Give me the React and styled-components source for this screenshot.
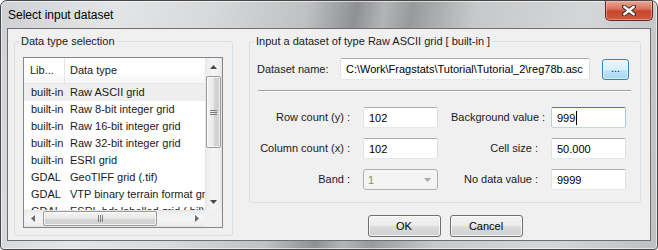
import React from "react";
import styled, { createGlobalStyle } from "styled-components";

//-----데이터
const rows = [
  ["built-in", "Raw ASCII grid"],
  ["built-in", "Raw 8-bit integer grid"],
  ["built-in", "Raw 16-bit integer grid"],
  ["built-in", "Raw 32-bit integer grid"],
  ["built-in", "ESRI grid"],
  ["GDAL", "GeoTIFF grid (.tif)"],
  ["GDAL", "VTP binary terrain format grid (.bt)"],
  ["GDAL", "ESRI .hdr labelled grid (.bil)"],
];

//-----아이콘
const Tri = ({ dir, color = "#4a4a4a" }) => {
  const pts = {
    up: "0,4 7,4 3.5,0",
    down: "0,0 7,0 3.5,4",
    left: "4,0 4,7 0,3.5",
    right: "0,0 0,7 4,3.5",
  }[dir];
  const v = dir === "up" || dir === "down";
  return (
    <svg width={v ? 7 : 4} height={v ? 4 : 7} viewBox={v ? "0 0 7 4" : "0 0 4 7"}>
      <polygon points={pts} fill={color} />
    </svg>
  );
};

const CloseGlyph = () => (
  <svg width="14" height="11" viewBox="0 0 14 11">
    <path d="M2 1.5 L12 9.5 M12 1.5 L2 9.5" stroke="#3a2a28" strokeWidth="4.2" strokeLinecap="round" />
    <path d="M2.3 1.8 L11.7 9.2 M11.7 1.8 L2.3 9.2" stroke="#fff" strokeWidth="2.4" strokeLinecap="round" />
  </svg>
);

const Grip = ({ vertical }) =>
  vertical ? (
    <svg width="7" height="7" viewBox="0 0 7 7">
      <path d="M0 1.5h7M0 3.5h7M0 5.5h7" stroke="#7d7d7d" strokeWidth="1" />
    </svg>
  ) : (
    <svg width="7" height="7" viewBox="0 0 7 7">
      <path d="M1.5 0v7M3.5 0v7M5.5 0v7" stroke="#7d7d7d" strokeWidth="1" />
    </svg>
  );

//-----메인
function App() {
  return (
    <>
      <GlobalStyle />
      <Window>
        <TitleBar>
          <Title>Select input dataset</Title>
          <CloseButton>
            <CloseGlyph />
          </CloseButton>
        </TitleBar>
        <Client>
          <Group $width={219}>
            <Legend>Data type selection</Legend>
            <ListView>
              <ListBody>
                <HeaderRow>
                  <HeaderCell $first>Lib...</HeaderCell>
                  <HeaderCell>Data type</HeaderCell>
                </HeaderRow>
                {rows.map(([lib, name], i) => (
                  <Row key={i} $selected={i === 0}>
                    <Cell $first>{lib}</Cell>
                    <Cell>{name}</Cell>
                  </Row>
                ))}
              </ListBody>
              <VScroll>
                <ArrowBox>
                  <Tri dir="up" />
                </ArrowBox>
                <VThumb>
                  <Grip vertical />
                </VThumb>
                <Spacer />
                <ArrowBox>
                  <Tri dir="down" />
                </ArrowBox>
              </VScroll>
              <HScroll>
                <ArrowBox>
                  <Tri dir="left" color="#6a6a6a" />
                </ArrowBox>
                <HThumb>
                  <Grip />
                </HThumb>
                <Spacer />
                <ArrowBox>
                  <Tri dir="right" color="#6a6a6a" />
                </ArrowBox>
              </HScroll>
              <Corner />
            </ListView>
          </Group>

          <RightColumn>
            <Group $width={392}>
              <Legend>Input a dataset of type Raw ASCII grid [ built-in ]</Legend>
              <DatasetRow>
                <DatasetLabel>Dataset name:</DatasetLabel>
                <TextBox $width={250} $height={22}>
                  C:\Work\Fragstats\Tutorial\Tutorial_2\reg78b.asc
                </TextBox>
                <BrowseButton>...</BrowseButton>
              </DatasetRow>
              <Separator />
              <FormGrid>
                <FieldLabel>Row count (y) :</FieldLabel>
                <TextBox>102</TextBox>
                <FieldLabel>Background value :</FieldLabel>
                <TextBox $focused>
                  999
                  <Caret />
                </TextBox>
                <FieldLabel>Column count (x) :</FieldLabel>
                <TextBox>102</TextBox>
                <FieldLabel>Cell size :</FieldLabel>
                <TextBox>50.000</TextBox>
                <FieldLabel>Band :</FieldLabel>
                <Combo>
                  <span>1</span>
                  <Tri dir="down" color="#a9a9a9" />
                </Combo>
                <FieldLabel>No data value :</FieldLabel>
                <TextBox>9999</TextBox>
              </FormGrid>
            </Group>
            <ButtonRow>
              <PushButton>OK</PushButton>
              <PushButton>Cancel</PushButton>
            </ButtonRow>
          </RightColumn>
        </Client>
      </Window>
    </>
  );
}

export default App;

//-----스타일
const GlobalStyle = createGlobalStyle`
  html, body {
    margin: 0;
    padding: 0;
    background: #ffffff;
  }
  body {
    font-family: "Liberation Sans", Arial, sans-serif;
    font-size: 11px;
    color: #1a1a1a;
  }
  * { box-sizing: border-box; }
`;

const Window = styled.div`
  width: 658px;
  height: 250px;
  display: flex;
  flex-direction: column;
  padding: 0 6px 8px;
  border: 1px solid #474747;
  border-radius: 7px 7px 4px 4px;
  box-shadow: inset 0 0 0 1px rgba(255, 255, 255, 0.6);
  background: linear-gradient(
    100deg,
    #cfd1d4 0%,
    #e4e5e7 16%,
    #d8d9db 30%,
    #bfc0c2 44%,
    #8f9093 51%,
    #b3b4b6 55%,
    #999a9c 59%,
    #c7c8ca 68%,
    #d5d6d8 84%,
    #bfc0c2 100%
  );
`;

const TitleBar = styled.div`
  height: 27px;
  display: flex;
  align-items: flex-start;
  justify-content: space-between;
  margin-right: -2px;
`;

const Title = styled.div`
  padding-left: 1px;
  line-height: 28px;
  font-size: 12px;
  color: #000;
`;

const CloseButton = styled.div`
  width: 48px;
  height: 20px;
  display: flex;
  align-items: center;
  justify-content: center;
  border: 1px solid #5c2a22;
  border-top: none;
  border-radius: 0 0 5px 5px;
  background: linear-gradient(#e9a695 0%, #d9755f 40%, #c7452d 55%, #cf5a3e 100%);
  box-shadow: inset 0 0 0 1px rgba(255, 210, 200, 0.45);
`;

const Client = styled.div`
  flex: 1;
  display: flex;
  gap: 16px;
  padding: 6px 9px 0 6px;
  border: 1px solid #6e6e6e;
  background: #f0f0f0;
`;

const Group = styled.fieldset`
  width: ${(p) => p.$width}px;
  margin: 0;
  padding: 0;
  align-self: flex-start;
  border: 1px solid #d5dfe5;
  border-radius: 3px;
`;

const Legend = styled.legend`
  margin-left: 4px;
  padding: 0 2px;
  line-height: 13px;
  color: #1a1a1a;
`;

const ListView = styled.div`
  width: 200px;
  height: 171px;
  margin: 9px 9px 7px 8px;
  display: grid;
  grid-template-columns: 181px 17px;
  grid-template-rows: 152px 17px;
  border: 1px solid #828790;
  background: #fff;
`;

const ListBody = styled.div`
  overflow: hidden;
`;

const HeaderRow = styled.div`
  height: 26px;
  display: grid;
  grid-template-columns: 41px 1fr;
  border-bottom: 1px solid #e5e5e5;
  background: linear-gradient(#ffffff 0%, #ffffff 55%, #f5f6f7 100%);
`;

const HeaderCell = styled.div`
  padding-left: ${(p) => (p.$first ? 6 : 5)}px;
  line-height: 25px;
  white-space: nowrap;
  border-right: ${(p) => (p.$first ? "1px solid #e5e5e5" : "none")};
`;

const Row = styled.div`
  height: 17px;
  display: grid;
  grid-template-columns: 41px 1fr;
  line-height: 17px;
  white-space: nowrap;
  background: ${(p) => (p.$selected ? "#eeeeee" : "transparent")};
`;

const Cell = styled.div`
  padding-left: ${(p) => (p.$first ? 7 : 5)}px;
  overflow: ${(p) => (p.$first ? "hidden" : "visible")};
`;

const VScroll = styled.div`
  display: flex;
  flex-direction: column;
  background: linear-gradient(90deg, #e3e3e3 0, #eeeeee 2px, #f5f5f5 50%, #eeeeee calc(100% - 2px), #e3e3e3 100%);
`;

const HScroll = styled.div`
  display: flex;
  background: linear-gradient(#e3e3e3 0, #eeeeee 2px, #f5f5f5 50%, #eeeeee calc(100% - 2px), #e3e3e3 100%);
`;

const ArrowBox = styled.div`
  width: 17px;
  height: 17px;
  flex: none;
  display: flex;
  align-items: center;
  justify-content: center;
`;

const Spacer = styled.div`
  flex: 1;
`;

const VThumb = styled.div`
  height: 72px;
  margin: 1px 1px 0;
  display: flex;
  align-items: center;
  justify-content: center;
  border: 1px solid #9a9a9a;
  border-radius: 2px;
  background: linear-gradient(90deg, #f4f4f4 0%, #e8e8e8 50%, #d6d6d6 51%, #cfcfcf 100%);
  box-shadow: inset 0 0 0 1px rgba(255, 255, 255, 0.7);
`;

const HThumb = styled.div`
  width: 114px;
  margin: 1px 0 1px 2px;
  display: flex;
  align-items: center;
  justify-content: center;
  border: 1px solid #9a9a9a;
  border-radius: 2px;
  background: linear-gradient(#f4f4f4 0%, #e8e8e8 50%, #d6d6d6 51%, #cfcfcf 100%);
  box-shadow: inset 0 0 0 1px rgba(255, 255, 255, 0.7);
`;

const Corner = styled.div`
  background: #f0f0f0;
`;

const RightColumn = styled.div`
  display: flex;
  flex-direction: column;
`;

const DatasetRow = styled.div`
  margin-top: 10px;
  padding-left: 7px;
  display: flex;
  align-items: center;
`;

const DatasetLabel = styled.div`
  width: 83px;
  flex: none;
`;

const TextBox = styled.div`
  width: ${(p) => p.$width || 75}px;
  height: ${(p) => p.$height || 21}px;
  padding-left: 5px;
  display: flex;
  align-items: center;
  overflow: hidden;
  white-space: nowrap;
  color: #000;
  background: #fff;
  border: 1px solid;
  border-radius: 2px;
  border-color: ${(p) =>
    p.$focused ? "#3d7bad #a4c9e3 #b7d9ed #b5cfe7" : "#abadb3 #dbdfe6 #e3e9ef #e2e3ea"};
`;

const Caret = styled.span`
  width: 1px;
  height: 14px;
  margin-left: 1px;
  background: #000;
`;

const BrowseButton = styled.div`
  width: 27px;
  height: 21px;
  margin-left: 12px;
  display: flex;
  align-items: center;
  justify-content: center;
  padding-bottom: 2px;
  color: #102040;
  border: 1px solid #3c7fb1;
  border-radius: 3px;
  background: linear-gradient(#eaf6fd 0%, #d9f0fc 50%, #bee6fd 51%, #a7d9f5 100%);
  box-shadow: inset 0 0 0 1px rgba(255, 255, 255, 0.55);
`;

const Separator = styled.div`
  margin: 10px 9px 0 8px;
  border-top: 1px solid #a0a0a0;
  border-bottom: 1px solid #ffffff;
`;

const FormGrid = styled.div`
  margin: 15px 0 0 8px;
  padding-bottom: 12px;
  display: grid;
  grid-template-columns: 92px 75px 87px 75px;
  grid-auto-rows: 21px;
  column-gap: 13px;
  row-gap: 10px;
`;

const FieldLabel = styled.div`
  line-height: 21px;
  text-align: right;
  white-space: nowrap;
  color: #1a1a1a;
`;

const Combo = styled.div`
  width: 75px;
  height: 21px;
  padding: 0 6px 0 4px;
  display: flex;
  align-items: center;
  justify-content: space-between;
  color: #8a8a8a;
  border: 1px solid #adb2b5;
  border-radius: 3px;
  background: #f4f4f4;
`;

const ButtonRow = styled.div`
  margin-top: 12px;
  display: flex;
  justify-content: center;
  gap: 9px;
`;

const PushButton = styled.div`
  width: 73px;
  height: 22px;
  display: flex;
  align-items: center;
  justify-content: center;
  color: #000;
  border: 1px solid #707070;
  border-radius: 3px;
  background: linear-gradient(#f2f2f2 0%, #ebebeb 50%, #dddddd 51%, #cfcfcf 100%);
  box-shadow: inset 0 0 0 1px rgba(255, 255, 255, 0.75);
`;
